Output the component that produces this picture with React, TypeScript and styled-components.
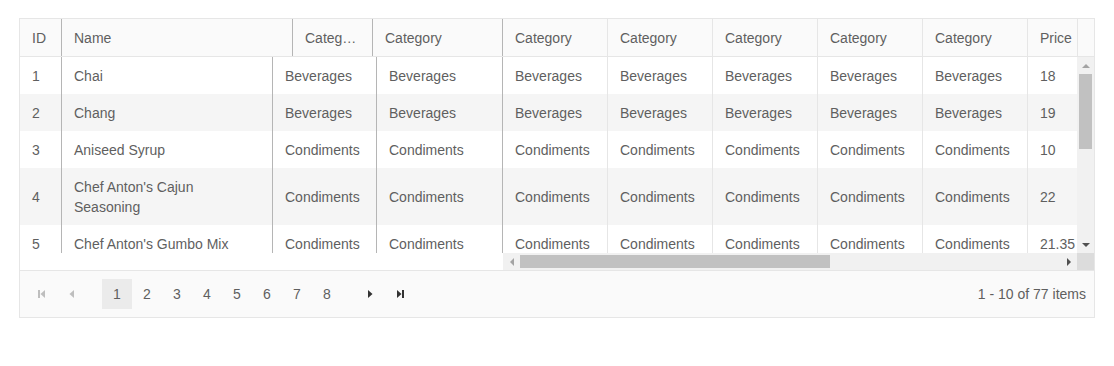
import styled, { createGlobalStyle } from 'styled-components';

const GlobalStyle = createGlobalStyle`
    html, body {
        margin: 0;
        padding: 0;
        background: #ffffff;
    }
`;

interface Product {
    id: number,
    name: string,
    category: string,
    price: string,
    height: number,
}

const products: Product[] = [
    { id: 1, name: 'Chai', category: 'Beverages', price: '18', height: 37 },
    { id: 2, name: 'Chang', category: 'Beverages', price: '19', height: 37 },
    { id: 3, name: 'Aniseed Syrup', category: 'Condiments', price: '10', height: 37 },
    { id: 4, name: "Chef Anton's Cajun Seasoning", category: 'Condiments', price: '22', height: 57 },
    { id: 5, name: "Chef Anton's Gumbo Mix", category: 'Condiments', price: '21.35', height: 37 },
];

const LOCKED_HEAD = [41, 230, 79, 129];
const LOCKED_BODY = [41, 210, 103, 125];
const SCROLL_COL = 104;
const SCROLL_COUNT = 5;

const App = () => {
    return (
        <Page>
            <GlobalStyle />
            <Grid>
                <HeaderRow>
                    <LockedPane>
                        <HeadCell $w={LOCKED_HEAD[0]} $locked>ID</HeadCell>
                        <HeadCell $w={LOCKED_HEAD[1]} $locked>Name</HeadCell>
                        <HeadCell $w={LOCKED_HEAD[2]} $locked>Category</HeadCell>
                        <HeadCell $w={LOCKED_HEAD[3]} $last>Category</HeadCell>
                    </LockedPane>
                    <ScrollHead>
                        <Strip>
                            {Array.from({ length: SCROLL_COUNT }).map((_, i) => (
                                <HeadCell key={i} $w={SCROLL_COL}>Category</HeadCell>
                            ))}
                            <HeadCell $w={SCROLL_COL}>Price</HeadCell>
                        </Strip>
                    </ScrollHead>
                    <HeadSpacer />
                </HeaderRow>

                <BodyRow>
                    <LockedColumn>
                        <LockedPane $body>
                            <Stack>
                                {products.map((p, r) => (
                                    <Row key={p.id} $alt={r % 2 === 1} $h={p.height}>
                                        <Cell $w={LOCKED_BODY[0]} $locked>{p.id}</Cell>
                                        <Cell $w={LOCKED_BODY[1]} $locked>{p.name}</Cell>
                                        <Cell $w={LOCKED_BODY[2]} $locked>{p.category}</Cell>
                                        <Cell $w={LOCKED_BODY[3]} $last>{p.category}</Cell>
                                    </Row>
                                ))}
                            </Stack>
                        </LockedPane>
                    </LockedColumn>

                    <ScrollArea>
                        <ScrollTop>
                            <Viewport>
                                <Stack>
                                    {products.map((p, r) => (
                                        <Row key={p.id} $alt={r % 2 === 1} $h={p.height}>
                                            {Array.from({ length: SCROLL_COUNT }).map((_, i) => (
                                                <Cell key={i} $w={SCROLL_COL}>{p.category}</Cell>
                                            ))}
                                            <Cell $w={SCROLL_COL}>{p.price}</Cell>
                                        </Row>
                                    ))}
                                </Stack>
                            </Viewport>
                            <VScroll>
                                <ArrowBtn>
                                    <Tri $dir="up" />
                                </ArrowBtn>
                                <VThumb />
                                <VTrack />
                                <ArrowBtn>
                                    <Tri $dir="down" $active />
                                </ArrowBtn>
                            </VScroll>
                        </ScrollTop>
                        <ScrollBottom>
                            <HScroll>
                                <ArrowBtn>
                                    <Tri $dir="left" />
                                </ArrowBtn>
                                <HThumb />
                                <HTrack />
                                <ArrowBtn>
                                    <Tri $dir="right" $active />
                                </ArrowBtn>
                            </HScroll>
                            <Corner />
                        </ScrollBottom>
                    </ScrollArea>
                </BodyRow>

                <Pager>
                    <PagerNav>
                        <NavButton $disabled aria-label="first page">
                            <svg width="8" height="8" viewBox="0 0 8 8">
                                <rect x="0" y="0" width="2" height="8" fill="currentColor" />
                                <path d="M7 0 L2.5 4 L7 8 Z" fill="currentColor" />
                            </svg>
                        </NavButton>
                        <NavButton $disabled aria-label="previous page">
                            <svg width="8" height="8" viewBox="0 0 8 8">
                                <path d="M6 0 L1.5 4 L6 8 Z" fill="currentColor" />
                            </svg>
                        </NavButton>
                        <Pages>
                            {[1, 2, 3, 4, 5, 6, 7, 8].map(n => (
                                <PageNumber key={n} $selected={n === 1}>{n}</PageNumber>
                            ))}
                        </Pages>
                        <NavButton aria-label="next page">
                            <svg width="8" height="8" viewBox="0 0 8 8">
                                <path d="M2 0 L6.5 4 L2 8 Z" fill="currentColor" />
                            </svg>
                        </NavButton>
                        <NavButton aria-label="last page">
                            <svg width="8" height="8" viewBox="0 0 8 8">
                                <path d="M1 0 L5.5 4 L1 8 Z" fill="currentColor" />
                                <rect x="6" y="0" width="2" height="8" fill="currentColor" />
                            </svg>
                        </NavButton>
                    </PagerNav>
                    <PagerInfo>1 - 10 of 77 items</PagerInfo>
                </Pager>
            </Grid>
        </Page>
    )
}

const Page = styled.div`
    padding: 18px 0 0 19px;
`;

const Grid = styled.div`
    box-sizing: border-box;
    width: 1076px;
    border: 1px solid #e6e6e6;
    font-family: "Liberation Sans", Arial, sans-serif;
    font-size: 14px;
    color: #5f5f5f;
    background: #ffffff;
`;

const HeaderRow = styled.div`
    display: flex;
    height: 38px;
    box-sizing: border-box;
    background: #fafafa;
    border-bottom: 1px solid #e6e6e6;
`;

const LockedPane = styled.div<{ $body?: boolean }>`
    display: flex;
    box-sizing: border-box;
    width: 483px;
    flex-shrink: 0;
    border-right: 1px solid #b5b5b5;
    height: ${props => props.$body ? '196px' : '100%'};
    overflow: hidden;
`;

const ScrollHead = styled.div`
    width: 574px;
    overflow: hidden;
`;

const HeadSpacer = styled.div`
    width: 17px;
    border-left: 1px solid #e6e6e6;
    box-sizing: border-box;
`;

const Strip = styled.div`
    display: flex;
    width: max-content;
`;

interface CellProps {
    $w: number,
    $locked?: boolean,
    $last?: boolean,
}

const HeadCell = styled.div<CellProps>`
    box-sizing: content-box;
    width: ${props => props.$w - 24}px;
    flex-shrink: 0;
    padding: 9px 12px 8px;
    line-height: 20px;
    white-space: nowrap;
    overflow: hidden;
    text-overflow: ellipsis;
    border-right: ${props => props.$last ? 'none' : `1px solid ${props.$locked ? '#b5b5b5' : '#e6e6e6'}`};
`;

const BodyRow = styled.div`
    display: flex;
    height: 213px;
`;

const LockedColumn = styled.div`
    width: 483px;
    flex-shrink: 0;
    background: #ffffff;
`;

const Stack = styled.div`
    display: flex;
    flex-direction: column;
    width: max-content;
`;

const Row = styled.div<{ $alt: boolean, $h: number }>`
    display: flex;
    height: ${props => props.$h}px;
    flex-shrink: 0;
    background: ${props => props.$alt ? '#f5f5f5' : '#ffffff'};
`;

const Cell = styled.div<CellProps>`
    box-sizing: content-box;
    width: ${props => props.$w - 24}px;
    flex-shrink: 0;
    display: flex;
    align-items: center;
    padding: 0 12px;
    line-height: 20px;
    border-right: ${props => props.$last ? 'none' : `1px solid ${props.$locked ? '#b5b5b5' : '#e6e6e6'}`};
`;

const ScrollArea = styled.div`
    display: flex;
    flex-direction: column;
    width: 591px;
`;

const ScrollTop = styled.div`
    display: flex;
    height: 196px;
`;

const Viewport = styled.div`
    width: 574px;
    height: 196px;
    overflow: hidden;
`;

const VScroll = styled.div`
    width: 17px;
    display: flex;
    flex-direction: column;
    align-items: center;
    background: #f1f1f1;
`;

const ArrowBtn = styled.div`
    width: 17px;
    height: 17px;
    flex-shrink: 0;
    display: flex;
    align-items: center;
    justify-content: center;
`;

const Tri = styled.span<{ $dir: 'up' | 'down' | 'left' | 'right', $active?: boolean }>`
    width: 0;
    height: 0;
    border-style: solid;
    ${props => {
        const c = props.$active ? '#505050' : '#a3a3a3';
        switch (props.$dir) {
            case 'up': return `border-width: 0 4px 4px 4px; border-color: transparent transparent ${c} transparent;`;
            case 'down': return `border-width: 4px 4px 0 4px; border-color: ${c} transparent transparent transparent;`;
            case 'left': return `border-width: 4px 4px 4px 0; border-color: transparent ${c} transparent transparent;`;
            default: return `border-width: 4px 0 4px 4px; border-color: transparent transparent transparent ${c};`;
        }
    }}
`;

const VThumb = styled.div`
    width: 13px;
    height: 75px;
    flex-shrink: 0;
    background: #c1c1c1;
`;

const VTrack = styled.div`
    flex: 1;
`;

const ScrollBottom = styled.div`
    display: flex;
    height: 17px;
`;

const HScroll = styled.div`
    width: 574px;
    display: flex;
    align-items: center;
    background: #f1f1f1;
`;

const HThumb = styled.div`
    width: 310px;
    height: 13px;
    flex-shrink: 0;
    background: #c1c1c1;
`;

const HTrack = styled.div`
    flex: 1;
`;

const Corner = styled.div`
    width: 17px;
    background: #dcdcdc;
`;

const Pager = styled.div`
    display: flex;
    align-items: center;
    justify-content: space-between;
    height: 47px;
    box-sizing: border-box;
    padding: 0 8px 0 7px;
    background: #fafafa;
    border-top: 1px solid #e6e6e6;
`;

const PagerNav = styled.div`
    display: flex;
    align-items: center;
`;

const NavButton = styled.div<{ $disabled?: boolean }>`
    width: 30px;
    height: 30px;
    display: flex;
    align-items: center;
    justify-content: center;
    color: ${props => props.$disabled ? '#b0b0b0' : '#333333'};
    opacity: ${props => props.$disabled ? 0.8 : 1};
`;

const Pages = styled.div`
    display: flex;
    margin: 0 13px 0 15px;
`;

const PageNumber = styled.div<{ $selected?: boolean }>`
    width: 30px;
    height: 30px;
    line-height: 30px;
    text-align: center;
    color: #5f5f5f;
    background: ${props => props.$selected ? '#ebebeb' : 'transparent'};
`;

const PagerInfo = styled.div`
    color: #5f5f5f;
    white-space: nowrap;
`;

export default App;
